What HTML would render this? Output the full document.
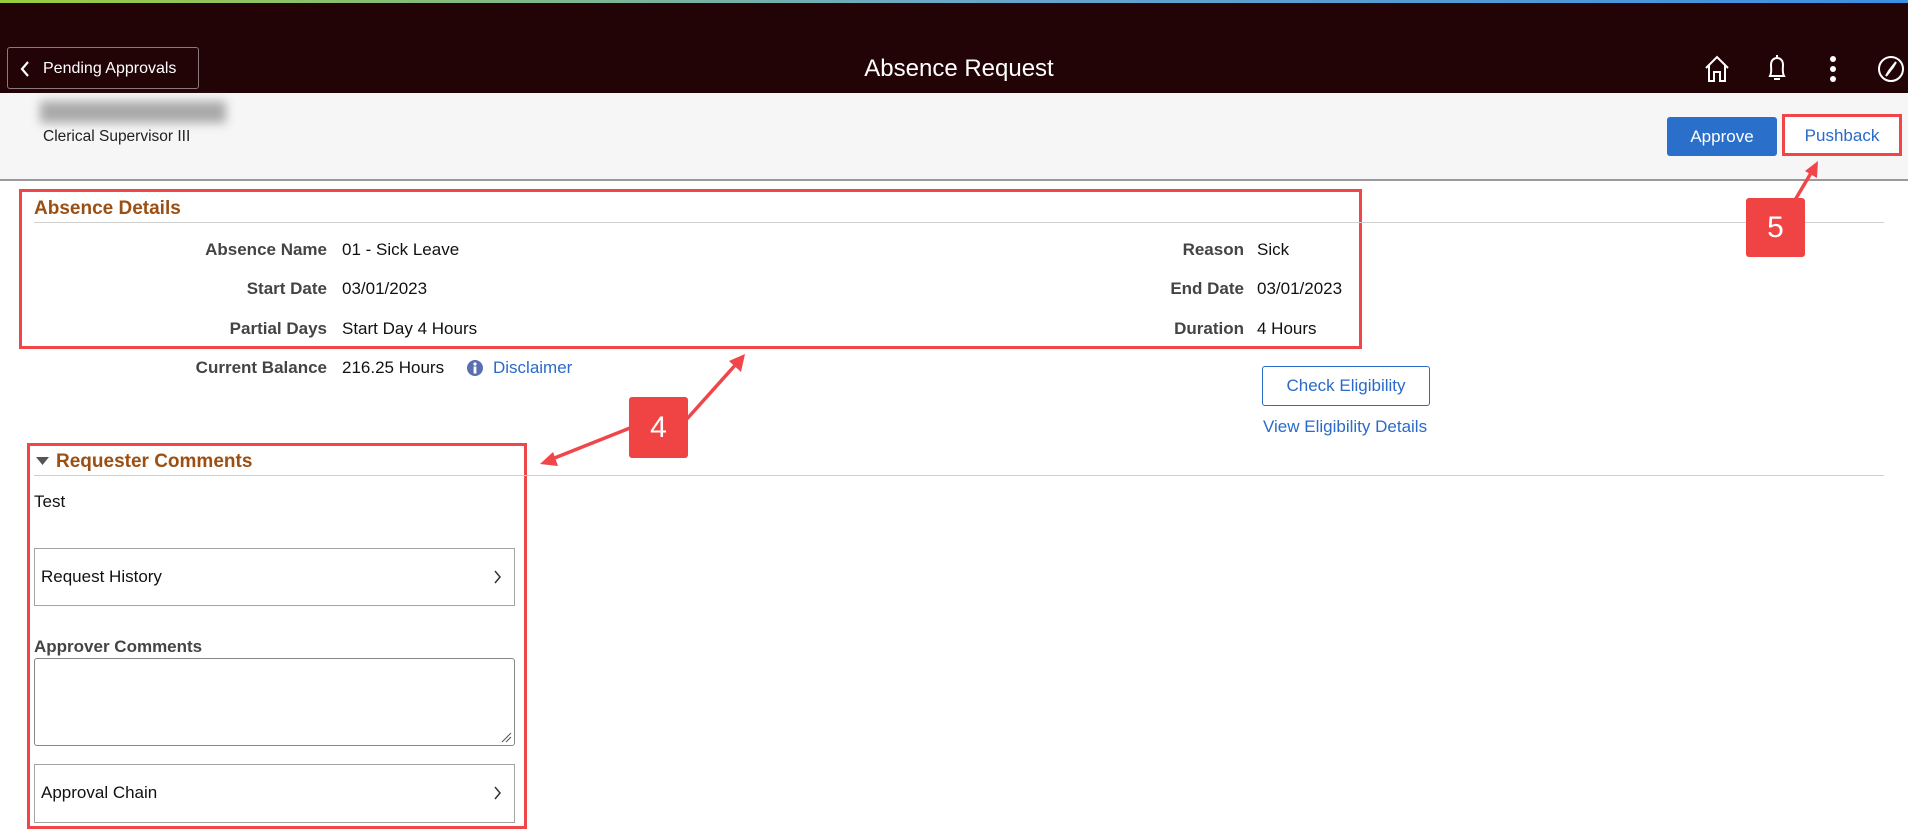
<!DOCTYPE html>
<html><head><meta charset="utf-8"><style>
*{box-sizing:border-box;margin:0;padding:0}
body{width:1908px;height:829px;overflow:hidden;background:#fff;font-family:"Liberation Sans",Arial,sans-serif;position:relative;color:#000}
.a{position:absolute;white-space:nowrap}
.lbl{font-weight:bold;color:#444;font-size:17px;text-align:right;width:300px}
.val{font-size:17px;color:#111}
.link{color:#2a6ac8;font-size:17px}
.rbox{position:absolute;border:3px solid #f0464a}
.nav{position:absolute;border:1px solid #a3a3a3;background:#fff}
</style></head><body>
<div class="a" style="left:0;top:0;width:1908px;height:3px;background:linear-gradient(90deg,#9ccc3c,#6aa8c8,#3d8fe0)"></div>
<div class="a" style="left:0;top:3px;width:1908px;height:90px;background:#220406"></div>
<div class="a" style="left:7px;top:47px;width:192px;height:42px;border:1px solid #8a7a7a;border-radius:3px;color:#fff;font-size:16px;line-height:42px;padding-left:35px">Pending Approvals</div>
<svg class="a" style="left:19px;top:60px" width="12" height="18"><path d="M9 2 L3 9 L9 16" stroke="#fff" stroke-width="2.2" fill="none"/></svg>
<div class="a" style="left:0;width:1918px;top:55px;text-align:center;color:#fff;font-size:24px">Absence Request</div>
<svg class="a" style="left:1703px;top:54px" width="28" height="30" fill="none" stroke="#fff" stroke-width="2"><path d="M3 14 L14 3 L25 14 M6 11 V27 H11 V18 H17 V27 H22 V11"/></svg>
<svg class="a" style="left:1765px;top:52px" width="24" height="32" fill="none" stroke="#fff" stroke-width="2"><path d="M12 3 V5 M5 24 C7 20 6 16 6 13 C6 8 9 6 12 6 C15 6 18 8 18 13 C18 16 17 20 19 24 Z M9 27 H15"/></svg>
<svg class="a" style="left:1827px;top:54px" width="12" height="30" fill="#fff"><circle cx="6" cy="5" r="3"/><circle cx="6" cy="15" r="3"/><circle cx="6" cy="25" r="3"/></svg>
<svg class="a" style="left:1876px;top:54px" width="30" height="30" fill="none" stroke="#fff" stroke-width="2"><circle cx="15" cy="15" r="12"/><path d="M20 8 L13 17 L10 22 L17 13 Z"/></svg>
<div class="a" style="left:0;top:93px;width:1908px;height:88px;background:#f6f6f6;border-bottom:2px solid #9a9a9a"></div>
<div class="a" style="left:40px;top:101px;width:186px;height:22px;background:#8a8a8a;filter:blur(5px);opacity:.7"></div>
<div class="a" style="left:43px;top:128px;font-size:15.5px;color:#222">Clerical Supervisor III</div>
<div class="a" style="left:1667px;top:117px;width:110px;height:39px;background:#2a6fc9;border-radius:3px;color:#fff;font-size:17px;text-align:center;line-height:39px">Approve</div>
<div class="a" style="left:1782px;top:114px;width:120px;height:42px;background:#fff;color:#2a6ac8;font-size:17px;text-align:center;line-height:38px;border:3px solid #f0464a">Pushback</div>
<div class="rbox" style="left:19px;top:189px;width:1343px;height:160px"></div>
<div class="a" style="left:34px;top:198px;font-size:19px;font-weight:bold;color:#9b4f13">Absence Details</div>
<div class="a" style="left:34px;top:222px;width:1850px;height:1px;background:#d0d0d0"></div>
<div class="a lbl" style="left:27px;top:240px">Absence Name</div><div class="a val" style="left:342px;top:240px">01 - Sick Leave</div>
<div class="a lbl" style="left:27px;top:279px">Start Date</div><div class="a val" style="left:342px;top:279px">03/01/2023</div>
<div class="a lbl" style="left:27px;top:319px">Partial Days</div><div class="a val" style="left:342px;top:319px">Start Day 4 Hours</div>
<div class="a lbl" style="left:27px;top:358px">Current Balance</div><div class="a val" style="left:342px;top:358px">216.25 Hours</div>
<svg class="a" style="left:466px;top:359px" width="18" height="18"><circle cx="9" cy="9" r="8" fill="#5a6eb0"/><rect x="7.6" y="7.5" width="2.8" height="7" fill="#fff"/><circle cx="9" cy="5" r="1.6" fill="#fff"/></svg>
<div class="a link" style="left:493px;top:358px">Disclaimer</div>
<div class="a lbl" style="left:944px;top:240px">Reason</div><div class="a val" style="left:1257px;top:240px">Sick</div>
<div class="a lbl" style="left:944px;top:279px">End Date</div><div class="a val" style="left:1257px;top:279px">03/01/2023</div>
<div class="a lbl" style="left:944px;top:319px">Duration</div><div class="a val" style="left:1257px;top:319px">4 Hours</div>
<div class="a" style="left:1262px;top:366px;width:168px;height:40px;border:1px solid #2a6ac8;border-radius:3px;color:#2a6ac8;font-size:17px;text-align:center;line-height:38px">Check Eligibility</div>
<div class="a link" style="left:1263px;top:417px">View Eligibility Details</div>
<div class="rbox" style="left:27px;top:443px;width:500px;height:386px"></div>
<svg class="a" style="left:36px;top:457px" width="14" height="10"><path d="M0 0 H13 L6.5 8 Z" fill="#555"/></svg>
<div class="a" style="left:56px;top:451px;font-size:19px;font-weight:bold;color:#9b4f13">Requester Comments</div>
<div class="a" style="left:34px;top:475px;width:1850px;height:1px;background:#d0d0d0"></div>
<div class="a val" style="left:34px;top:492px">Test</div>
<div class="nav" style="left:34px;top:548px;width:481px;height:58px"></div>
<div class="a val" style="left:41px;top:567px">Request History</div>
<svg class="a" style="left:493px;top:569px" width="10" height="16"><path d="M2 2 L7 8 L2 14" stroke="#333" stroke-width="1.5" fill="none"/></svg>
<div class="a lbl" style="left:34px;top:637px;text-align:left">Approver Comments</div>
<div class="nav" style="left:34px;top:658px;width:481px;height:88px;border-color:#888;border-radius:3px"></div>
<svg class="a" style="left:500px;top:731px" width="12" height="12"><path d="M2 11 L11 2 M6 11 L11 6" stroke="#555" stroke-width="1"/></svg>
<div class="nav" style="left:34px;top:764px;width:481px;height:59px"></div>
<div class="a val" style="left:41px;top:783px">Approval Chain</div>
<svg class="a" style="left:493px;top:785px" width="10" height="16"><path d="M2 2 L7 8 L2 14" stroke="#333" stroke-width="1.5" fill="none"/></svg>
<svg class="a" style="left:0;top:0" width="1908" height="829" fill="none">
<g stroke="#f0464a" stroke-width="3.5"><path d="M686 420 L738 362"/><path d="M630 428 L552 459"/><path d="M1795 200 L1814 168"/></g>
<g fill="#f0464a"><path d="M745 354 L741 372 L729 361 Z"/><path d="M540 464 L553 452 L558 466 Z"/><path d="M1818 161 L1817 178 L1805 171 Z"/></g>
</svg>
<div class="a" style="left:629px;top:397px;width:59px;height:61px;background:#f04444;border-radius:3px;color:#fff;font-size:30px;text-align:center;line-height:61px">4</div>
<div class="a" style="left:1746px;top:198px;width:59px;height:59px;background:#f04444;border-radius:3px;color:#fff;font-size:30px;text-align:center;line-height:59px">5</div>
</body></html>
